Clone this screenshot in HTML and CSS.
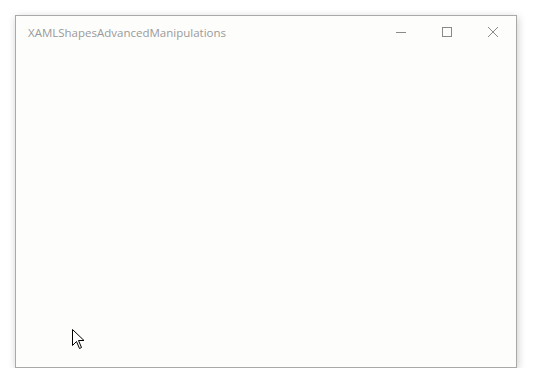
FILE: index.html
```html
<!DOCTYPE html>
<html lang="en">
<head>
    <meta charset="UTF-8">
    <title>XAMLShapesAdvancedManipulations</title>
    <link rel="stylesheet" href="styles.css">
</head>
<body>

    <!-- Janela do app -->
    <div class="window">
        <div class="titlebar">
            <span class="title">XAMLShapesAdvancedManipulations</span>
            <div class="controls">
                <div class="ctrl">
                    <svg width="10" height="10" viewBox="0 0 10 10"><path d="M0 5.5h10" stroke="#8a8a8a" stroke-width="1"/></svg>
                </div>
                <div class="ctrl">
                    <svg width="10" height="10" viewBox="0 0 10 10"><rect x="0.5" y="0.5" width="9" height="9" fill="none" stroke="#8a8a8a" stroke-width="1"/></svg>
                </div>
                <div class="ctrl">
                    <svg width="10" height="10" viewBox="0 0 10 10"><path d="M0 0L10 10M10 0L0 10" stroke="#8a8a8a" stroke-width="1"/></svg>
                </div>
            </div>
        </div>
        <div class="content">
            <svg class="cursor" width="13" height="20" viewBox="0 0 13 20">
                <path d="M0.5 0.5V16.5L4.5 12.5L7.5 19.5L9.5 18.5L6.5 11.5H12L0.5 0.5Z" fill="#fff" stroke="#000" stroke-width="1" stroke-linejoin="miter"/>
            </svg>
        </div>
    </div>

</body>
</html>
```

FILE: styles.css
```css
body {
    margin: 0;
    padding: 15px 0 0 15px;
    background: #fff;
    font-family: 'Open Sans', sans-serif;
}

.window {
    width: 502px;
    height: 353px;
    box-sizing: border-box;
    border: 1px solid #a9a9a9;
    background: #fdfdfc;
    box-shadow: 1px 2px 8px rgba(0, 0, 0, 0.2);
    display: flex;
    flex-direction: column;
}

.titlebar {
    height: 32px;
    display: flex;
    align-items: center;
    justify-content: space-between;
    padding-left: 12px;
}

.title {
    font-size: 11.5px;
    color: #9a9a9a;
}

.controls {
    display: flex;
    height: 100%;
}

.ctrl {
    width: 46px;
    display: flex;
    align-items: center;
    justify-content: center;
}

.content {
    flex: 1;
    position: relative;
}

.cursor {
    position: absolute;
    left: 56px;
    top: 281px;
}
```
